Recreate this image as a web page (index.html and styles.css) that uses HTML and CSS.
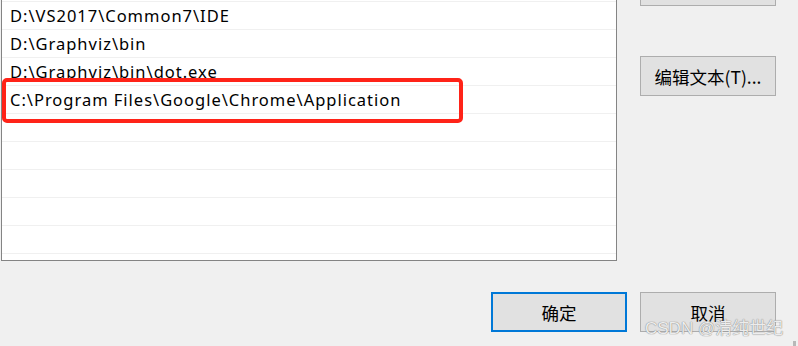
FILE: index.html
```html
<!DOCTYPE html>
<html>
<head>
<meta charset="utf-8">
<link rel="stylesheet" href="styles.css">
</head>
<body>
<div class="dialog">
  <div class="top">
    <div class="listbox">
      <div class="row">D:\VS2017\Common7\IDE</div>
      <div class="row">D:\Graphviz\bin</div>
      <div class="row">D:\Graphviz\bin\dot.exe</div>
      <div class="row">C:\Program Files\Google\Chrome\Application</div>
      <div class="row"></div>
      <div class="row"></div>
      <div class="row"></div>
      <div class="row"></div>
      <div class="row"></div>
      <div class="row"></div>
      <div class="highlight"></div>
    </div>
    <div class="side">
      <button class="btn btn-cut"></button>
      <button class="btn">编辑文本(T)...</button>
    </div>
  </div>
  <div class="bottom">
    <button class="btn btn-default">确定</button>
    <button class="btn">取消</button>
  </div>
  <div class="watermark">CSDN @清纯世纪</div>
  <div class="grip"></div>
</div>
</body>
</html>
```

FILE: styles.css
```css
html, body {
  margin: 0;
  padding: 0;
  background: #f0f0f0;
  width: 798px;
  height: 346px;
  overflow: hidden;
}
.dialog {
  position: relative;
  width: 798px;
  height: 346px;
  font-family: "Noto Sans", "Noto Sans CJK SC", sans-serif;
  font-size: 16px;
  color: #000;
}
.top {
  display: flex;
  align-items: flex-start;
}
.listbox {
  position: relative;
  margin-left: 1px;
  width: 614px;
  height: 259px;
  background: #fff;
  border: 1px solid #848484;
  border-top: none;
  overflow: hidden;
  padding-top: 1px;
  box-sizing: content-box;
}
.row {
  height: 27px;
  border-top: 1px solid #f0f0f0;
  padding-left: 8px;
  line-height: 27px;
  font-size: 16.5px;
  letter-spacing: 0.98px;
  white-space: nowrap;
}
.highlight {
  position: absolute;
  left: 0px;
  top: 78px;
  width: 461px;
  height: 45px;
  box-sizing: border-box;
  border: 4px solid #ff2318;
  border-radius: 5px;
}
.side {
  display: flex;
  flex-direction: column;
  gap: 50px;
  margin-left: 23px;
  margin-top: -34px;
}
.btn {
  width: 136px;
  height: 40px;
  box-sizing: border-box;
  background: #e1e1e1;
  border: 1px solid #adadad;
  font-family: "Noto Sans CJK SC", "Noto Sans", sans-serif;
  font-size: 17.5px;
  color: #000;
  padding: 0;
  margin: 0;
}
.btn-default {
  border: 2px solid #0078d7;
}
.bottom {
  display: flex;
  justify-content: flex-end;
  gap: 13px;
  margin-top: 31px;
  padding-right: 22px;
}
.watermark {
  position: absolute;
  left: 645px;
  top: 320px;
  line-height: 17px;
  font-family: "Liberation Sans", "Noto Sans CJK SC", sans-serif;
  font-size: 17px;
  color: rgba(255, 255, 255, 0.85);
  text-shadow: 0 0 1px #8a8a8a, 0 0 1px #8a8a8a;
  white-space: nowrap;
}
.grip {
  position: absolute;
  left: 793px;
  top: 341px;
  width: 3px;
  height: 5px;
  background: #b8b8b8;
}
```
